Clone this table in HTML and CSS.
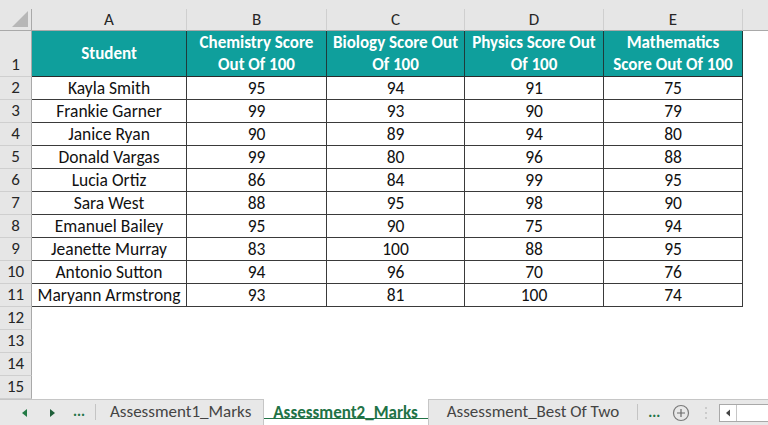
FILE: index.html
```html
<!DOCTYPE html>
<html>
<head>
<meta charset="utf-8">
<link rel="stylesheet" href="styles.css">
</head>
<body>
<div class="app">
  <div class="topband"></div>
  <div class="grid">
    <div class="corner"><svg width="18" height="18" viewBox="0 0 18 18"><polygon points="17,1 17,17 1,17" fill="#b7b7b7"/></svg></div>
    <div class="ch">A</div><div class="ch">B</div><div class="ch">C</div><div class="ch">D</div><div class="ch">E</div><div class="ch last"></div>

    <div class="rh rh1">1</div>
    <div class="hd"><span>Student</span></div>
    <div class="hd"><span>Chemistry Score<br>Out Of 100</span></div>
    <div class="hd"><span>Biology Score Out<br>Of 100</span></div>
    <div class="hd"><span>Physics Score Out<br>Of 100</span></div>
    <div class="hd"><span>Mathematics<br>Score Out Of 100</span></div>
    <div class="blank"></div>

    <div class="rh">2</div><div class="c">Kayla Smith</div><div class="c">95</div><div class="c">94</div><div class="c">91</div><div class="c">75</div><div class="blank"></div>
    <div class="rh">3</div><div class="c">Frankie Garner</div><div class="c">99</div><div class="c">93</div><div class="c">90</div><div class="c">79</div><div class="blank"></div>
    <div class="rh">4</div><div class="c">Janice Ryan</div><div class="c">90</div><div class="c">89</div><div class="c">94</div><div class="c">80</div><div class="blank"></div>
    <div class="rh">5</div><div class="c">Donald Vargas</div><div class="c">99</div><div class="c">80</div><div class="c">96</div><div class="c">88</div><div class="blank"></div>
    <div class="rh">6</div><div class="c">Lucia Ortiz</div><div class="c">86</div><div class="c">84</div><div class="c">99</div><div class="c">95</div><div class="blank"></div>
    <div class="rh">7</div><div class="c">Sara West</div><div class="c">88</div><div class="c">95</div><div class="c">98</div><div class="c">90</div><div class="blank"></div>
    <div class="rh">8</div><div class="c">Emanuel Bailey</div><div class="c">95</div><div class="c">90</div><div class="c">75</div><div class="c">94</div><div class="blank"></div>
    <div class="rh">9</div><div class="c">Jeanette Murray</div><div class="c">83</div><div class="c">100</div><div class="c">88</div><div class="c">95</div><div class="blank"></div>
    <div class="rh">10</div><div class="c">Antonio Sutton</div><div class="c">94</div><div class="c">96</div><div class="c">70</div><div class="c">76</div><div class="blank"></div>
    <div class="rh">11</div><div class="c">Maryann Armstrong</div><div class="c">93</div><div class="c">81</div><div class="c">100</div><div class="c">74</div><div class="blank"></div>

    <div class="rh">12</div><div class="empty"></div>
    <div class="rh">13</div><div class="empty"></div>
    <div class="rh">14</div><div class="empty"></div>
    <div class="rh">15</div><div class="empty"></div>
  </div>
  <div class="tabbar">
    <div class="nav">
      <svg class="arr" width="8" height="10" viewBox="0 0 8 10"><polygon points="6,1 6,9 1,5" fill="#237a45"/></svg>
      <svg class="arr arr2" width="8" height="10" viewBox="0 0 8 10"><polygon points="2,1 2,9 7,5" fill="#1f5f3a"/></svg>
      <span class="dots">...</span>
    </div>
    <div class="sep"></div>
    <div class="tab t1">Assessment1_Marks</div>
    <div class="tab active">Assessment2_Marks</div>
    <div class="tab t3">Assessment_Best Of Two</div>
    <div class="sep sep2"></div>
    <span class="dots dots2">...</span>
    <svg class="plus" width="18" height="18" viewBox="0 0 18 18"><circle cx="9" cy="9" r="7.5" fill="none" stroke="#7a7a7a" stroke-width="1.2"/><path d="M9 5v8M5 9h8" stroke="#6a6a6a" stroke-width="1.2"/></svg>
    <svg class="vdots" width="4" height="14" viewBox="0 0 4 14"><circle cx="2" cy="2" r="1" fill="#c2c2c2"/><circle cx="2" cy="7" r="1" fill="#c2c2c2"/><circle cx="2" cy="12" r="1" fill="#c2c2c2"/></svg>
    <div class="scroll">
      <div class="sbtn"><svg width="6" height="8" viewBox="0 0 6 8"><polygon points="5,0.5 5,7.5 1,4" fill="#444"/></svg></div>
      <div class="strack"></div>
    </div>
  </div>
</div>
</body>
</html>
```
FILE: styles.css
```css
* { box-sizing: border-box; }
html, body { margin: 0; padding: 0; }
body {
  width: 768px;
  height: 425px;
  overflow: hidden;
  background: #ffffff;
  font-family: Carlito, Calibri, Lato, "Open Sans", sans-serif;
  color: #111;
}
.app {
  display: flex;
  flex-direction: column;
  height: 425px;
}
.topband {
  height: 9px;
  background: #e6e6e6;
}
.grid {
  display: grid;
  grid-template-columns: 32px 155px 140px 138px 139px 139px 1fr;
  grid-template-rows: 22px 46px repeat(14, 23px);
}
.corner {
  background: #e6e6e6;
  border-right: 1px solid #a9a9a9;
  border-bottom: 1px solid #a9a9a9;
  display: flex;
  align-items: flex-end;
  justify-content: flex-end;
  padding: 0 2px 2px 0;
}
.ch {
  background: #e6e6e6;
  border-right: 1px solid #cfcfcf;
  border-bottom: 1px solid #a9a9a9;
  text-align: center;
  font-size: 17px;
  line-height: 21px;
  color: #262626;
}
.ch.last { border-right: none; }
.rh {
  background: #e6e6e6;
  border-right: 1px solid #a9a9a9;
  border-bottom: 1px solid #cfcfcf;
  text-align: center;
  font-size: 17px;
  line-height: 22px;
  color: #262626;
}
.rh1 {
  display: flex;
  align-items: flex-end;
  justify-content: center;
  line-height: 22px;
}
.hd {
  background: #0f9f9c;
  color: #ffffff;
  font-weight: bold;
  font-size: 17px;
  line-height: 22px;
  text-align: center;
  border-right: 1px solid #1f3b3a;
  border-bottom: 1px solid #2a2a2a;
  padding-top: 1px;
  white-space: nowrap;
  display: flex;
  align-items: center;
  justify-content: center;
}
.c {
  text-align: center;
  font-size: 17.5px;
  line-height: 22px;
  color: #111;
  border-right: 1px solid #3a3a3a;
  border-bottom: 1px solid #3a3a3a;
  white-space: nowrap;
}
.blank { background: #fff; }
.empty { grid-column: 2 / -1; background: #fff; }

.tabbar {
  flex: 1;
  background: #e8e8e8;
  border-top: 1px solid #c6c6c6;
  display: flex;
  align-items: stretch;
  color: #444;
}
.nav {
  display: flex;
  align-items: center;
  padding-left: 21px;
  width: 95px;
}
.arr2 { margin-left: 19px; }
.dots {
  color: #217346;
  font-weight: bold;
  margin-left: 17px;
  font-size: 15px;
  line-height: 1;
  padding-bottom: 2px;
}
.sep {
  width: 1px;
  background: #c4c4c4;
  margin: 4px 0 5px;
}
.tab {
  display: flex;
  align-items: center;
  font-size: 17px;
  color: #444;
  white-space: nowrap;
  padding-bottom: 2px;
}
.t1 { padding-left: 14px; padding-right: 12px; }
.tab.active {
  background: #ffffff;
  color: #217346;
  font-weight: bold;
  border-left: 1px solid #c6c6c6;
  border-right: 1px solid #c6c6c6;
  margin-top: -1px;
  padding: 0 10px 0 9px;
  box-shadow: inset 0 -6px 0 #ffffff, inset 0 -7px 0 #217346;
}
.t3 { padding-left: 18px; padding-right: 18px; }
.dots2 {
  display: flex;
  align-items: center;
  margin-left: 10px;
  padding-bottom: 0;
}
.plus { align-self: center; margin-left: 12px; }
.vdots { align-self: center; margin-left: 14px; }
.scroll {
  align-self: center;
  margin-left: 11px;
  flex: 1;
  height: 18px;
  display: flex;
  border: 1px solid #a9a9a9;
  border-right: none;
  background: #fff;
}
.sbtn {
  width: 17px;
  display: flex;
  align-items: center;
  justify-content: center;
  border-right: 1px solid #c6c6c6;
}
.strack { flex: 1; }
```
